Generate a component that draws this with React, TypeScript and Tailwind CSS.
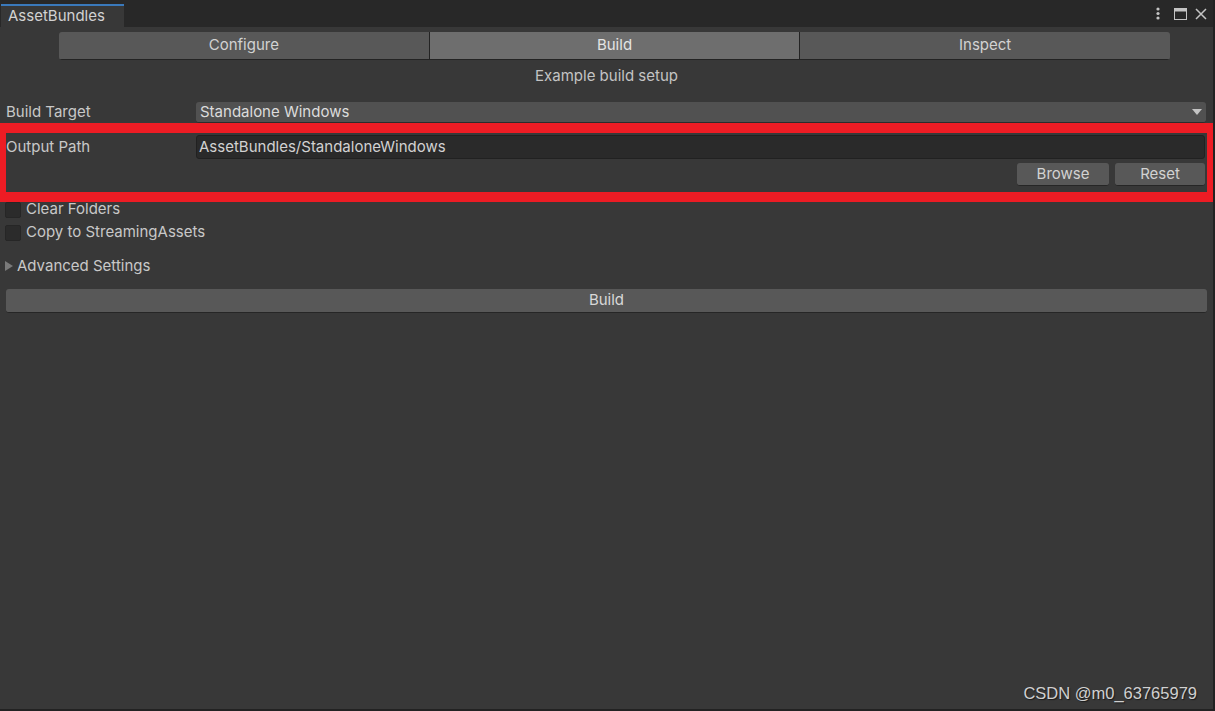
const font = { fontFamily: 'Inter, "Noto Sans", sans-serif' };

const Tab = ({ label, active }: { label: string; active?: boolean }) => (
  <div
    className={`flex-1 flex items-center justify-center h-full border-b border-[#232323] ${
      active ? 'bg-[#6e6e6e] border-x border-[#2a2a2a] text-[#e4e4e4]' : 'bg-[#585858] text-[#d2d2d2]'
    }`}
  >
    {label}
  </div>
);

const Checkbox = ({ label }: { label: string }) => (
  <div className="flex items-center h-[23px] pl-[5px] gap-[5px]">
    <div className="w-[16px] h-[16px] rounded-[2px] bg-[#2b2b2b] border border-[#262626]" />
    <span>{label}</span>
  </div>
);

export default function App() {
  return (
    <div
      className="relative w-full h-[711px] bg-[#383838] text-[#c8c8c8] text-[15px] flex flex-col overflow-hidden border-r-2 border-b-2 border-[#222222]"
      style={font}
    >
      {/* window tab strip */}
      <div className="h-[27px] bg-[#282828] flex items-end justify-between shrink-0">
        <div className="ml-px w-[123px] h-[23px] bg-[#383838] border-t-2 border-[#3a79bb] pl-[7px] leading-[20px] text-[#d2d2d2]">
          AssetBundles
        </div>
        <div className="flex items-center pr-[6px] self-center text-[#c4c4c4]">
          <svg width="4" height="13" viewBox="0 0 4 13" fill="currentColor" className="mr-[14px]">
            <circle cx="2" cy="2" r="1.6" />
            <circle cx="2" cy="6.5" r="1.6" />
            <circle cx="2" cy="11" r="1.6" />
          </svg>
          <svg width="13" height="12" viewBox="0 0 13 12" fill="none" stroke="currentColor" className="mr-[8px]">
            <rect x="0.5" y="0.5" width="12" height="11" strokeWidth="1" />
            <rect x="0.5" y="0.5" width="12" height="2.5" fill="currentColor" strokeWidth="1" />
          </svg>
          <svg width="12" height="12" viewBox="0 0 12 12" stroke="currentColor" strokeWidth="1.5">
            <path d="M1 1 L11 11 M11 1 L1 11" />
          </svg>
        </div>
      </div>

      {/* toolbar */}
      <div className="mt-[5px] ml-[59px] mr-[43px] h-[28px] flex rounded-[3px] overflow-hidden">
        <Tab label="Configure" />
        <Tab label="Build" active />
        <Tab label="Inspect" />
      </div>

      <div className="h-[32px] flex items-center justify-center text-[#c4c4c4]">Example build setup</div>

      {/* build target */}
      <div className="mt-[10px] flex items-center h-[21px] pl-[6px] pr-[7px]">
        <div className="w-[190px]">Build Target</div>
        <div className="flex-1 h-full rounded-[3px] bg-[#515151] border-b border-[#2c2c2c] flex items-center justify-between pl-[4px] pr-[4px] text-[#dcdcdc]">
          <span>Standalone Windows</span>
          <svg width="10" height="6" viewBox="0 0 10 6" fill="#c4c4c4">
            <path d="M0 0 H10 L5 6 Z" />
          </svg>
        </div>
      </div>

      {/* output path */}
      <div className="mt-[12px] flex items-center h-[24px] pl-[6px] pr-[8px]">
        <div className="w-[190px]">Output Path</div>
        <div className="flex-1 h-full rounded-[3px] bg-[#2a2a2a] border border-[#212121] flex items-center pl-[2px] text-[#d2d2d2]">
          AssetBundles/StandaloneWindows
        </div>
      </div>
      <div className="mt-[4px] flex justify-end gap-[6px] pr-[8px] h-[23px]">
        <button className="w-[92px] rounded-[3px] bg-[#585858] border-b border-[#262626] text-[#d2d2d2]">Browse</button>
        <button className="w-[90px] rounded-[3px] bg-[#585858] border-b border-[#262626] text-[#d2d2d2]">Reset</button>
      </div>

      {/* toggles */}
      <div className="mt-[12px]">
        <Checkbox label="Clear Folders" />
        <Checkbox label="Copy to StreamingAssets" />
      </div>

      <div className="mt-[11px] h-[22px] flex items-center pl-[5px] gap-[4px]">
        <svg width="8" height="10" viewBox="0 0 8 10" fill="#7a7a7a">
          <path d="M0 0 L8 5 L0 10 Z" />
        </svg>
        <span>Advanced Settings</span>
      </div>

      <div className="mt-[12px] mx-[6px] h-[24px] rounded-[3px] bg-[#585858] border-b border-[#262626] flex items-center justify-center text-[#d8d8d8]">
        Build
      </div>

      {/* annotation highlight */}
      <div className="absolute left-0 top-[123px] w-[1215px] h-[79px] border-[#ed1c24] border-t-[10px] border-b-[10px] border-l-[6px] border-r-[8px] pointer-events-none" />

      {/* watermark */}
      <div
        className="absolute right-[16px] bottom-[3px] text-[16.5px] text-[#d0d0d0]"
        style={{ fontFamily: '"Liberation Sans", Arial, sans-serif', textShadow: '1px 1px 1px #1a1a1a' }}
      >
        CSDN @m0_63765979
      </div>
    </div>
  );
}
